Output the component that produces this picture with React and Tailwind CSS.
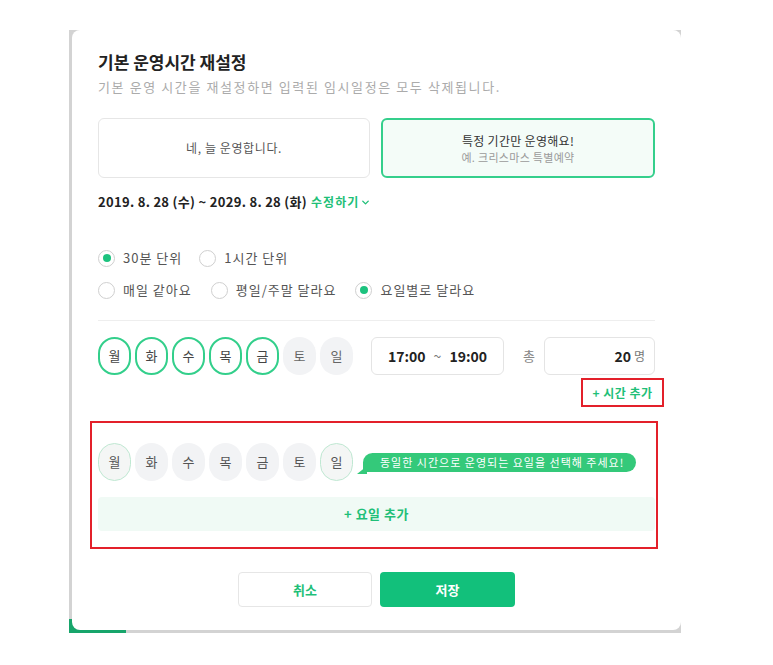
import { ChevronDown } from "lucide-react";

const font = { fontFamily: '"Noto Sans CJK KR", "Noto Sans", sans-serif' };

const days = ["월", "화", "수", "목", "금", "토", "일"];

function Radio({ checked, label }) {
  return (
    <label className="flex items-center gap-[8px]">
      <span className="w-[17px] h-[17px] rounded-full border border-[#cfcfcf] bg-white flex items-center justify-center">
        {checked && <span className="w-[8px] h-[8px] rounded-full bg-[#1cc27e]" />}
      </span>
      <span className="text-[13px] tracking-[1px] text-[#555]">{label}</span>
    </label>
  );
}

export default function App() {
  return (
    <div className="w-[773px] h-[665px] bg-white pt-[30px] pl-[69px]" style={font}>
      <div className="relative w-[612px] h-[603px] bg-[#d3d3d3] pl-[3px] pb-[3px]">
        {/* page progress behind the modal */}
        <div className="absolute left-0 bottom-0 w-[57px] h-[14px] bg-[#17a56b]" />

        <div className="relative h-full bg-white rounded-[8px] px-[26px] pt-[20px]">
          {/* Title */}
          <h2 className="text-[17px] leading-[24px] font-bold text-[#222]">기본 운영시간 재설정</h2>
          <p className="mt-[3px] text-[13px] leading-[20px] tracking-[1.6px] text-[#ababab]">
            기본 운영 시간을 재설정하면 입력된 임시일정은 모두 삭제됩니다.
          </p>

          {/* Options */}
          <div className="mt-[21px] flex gap-[11px]">
            <div className="flex-1 h-[60px] rounded-[6px] border border-[#e6e6e6] flex items-center justify-center text-[12px] tracking-[0.6px] text-[#555]">
              네, 늘 운영합니다.
            </div>
            <div className="flex-1 h-[60px] rounded-[6px] border-2 border-[#35cf8c] bg-[#f4fcf8] flex flex-col items-center justify-center">
              <span className="text-[12px] leading-[17px] tracking-[0.3px] text-[#333]">특정 기간만 운영해요!</span>
              <span className="text-[11px] leading-[16px] tracking-[0.3px] text-[#9a9a9a]">예. 크리스마스 특별예약</span>
            </div>
          </div>

          {/* Period */}
          <div className="mt-[14px] h-[20px] flex items-center text-[13px] font-bold tracking-[0.3px] text-[#222]">
            <span>2019. 8. 28 (수) ~ 2029. 8. 28 (화)</span>
            <span className="ml-[4px] text-[12px] tracking-[1px] text-[#1fbf78] flex items-center">
              수정하기
              <ChevronDown size={11} strokeWidth={3} className="ml-[1px]" />
            </span>
          </div>

          {/* Units */}
          <div className="mt-[36px] h-[20px] flex items-center gap-[17px]">
            <Radio checked label="30분 단위" />
            <Radio label="1시간 단위" />
          </div>
          <div className="mt-[12px] h-[20px] flex items-center gap-[19px]">
            <Radio label="매일 같아요" />
            <Radio label="평일/주말 달라요" />
            <Radio checked label="요일별로 달라요" />
          </div>

          <div className="mt-[20px] h-px bg-[#eeeeee]" />

          {/* Day row */}
          <div className="mt-[16px] flex items-center">
            <div className="flex gap-[4px]">
              {days.map((d, i) =>
                i < 5 ? (
                  <span
                    key={d}
                    className="w-[33px] h-[38px] rounded-full border-2 border-[#33cf8b] bg-white flex items-center justify-center text-[13px] text-[#444]"
                  >
                    {d}
                  </span>
                ) : (
                  <span
                    key={d}
                    className="w-[33px] h-[38px] rounded-full bg-[#f2f3f5] flex items-center justify-center text-[13px] text-[#666]"
                  >
                    {d}
                  </span>
                )
              )}
            </div>
            <div className="ml-[18px] w-[133px] h-[38px] rounded-[6px] border border-[#e4e4e4] flex items-center justify-center gap-[8px] text-[14px] font-bold text-[#222]">
              <span>17:00</span>
              <span className="font-normal text-[#777]">~</span>
              <span>19:00</span>
            </div>
            <span className="ml-[19px] text-[13px] text-[#888]">총</span>
            <div className="ml-[9px] flex-1 h-[38px] rounded-[6px] border border-[#e4e4e4] flex items-center justify-end pr-[9px] gap-[3px]">
              <span className="text-[14px] font-bold text-[#222]">20</span>
              <span className="text-[12px] text-[#777]">명</span>
            </div>
          </div>

          {/* Add time */}
          <div className="mt-[3px] flex justify-end -mr-[9px]">
            <div className="w-[83px] h-[29px] border-2 border-[#e3202a] flex items-center justify-center text-[12px] font-bold tracking-[0.5px] text-[#1fbf78]">
              + 시간 추가
            </div>
          </div>

          {/* New day group */}
          <div className="mt-[14px] -ml-[8px] -mr-[3px] h-[128px] border-2 border-[#e3202a] pt-[20px] pl-[6px] pr-[1px]">
            <div className="flex items-center">
              <div className="flex gap-[4px]">
                {days.map((d, i) => (
                  <span
                    key={d}
                    className={
                      i === 0 || i === 6
                        ? "w-[33px] h-[38px] rounded-full border border-[#bfe8d2] bg-[#f4f6f5] flex items-center justify-center text-[13px] text-[#555]"
                        : "w-[33px] h-[38px] rounded-full bg-[#f2f3f5] flex items-center justify-center text-[13px] text-[#555]"
                    }
                  >
                    {d}
                  </span>
                ))}
              </div>
              <div className="relative ml-[10px] w-[273px] h-[19px] rounded-[10px] rounded-bl-none bg-[#34c97a] flex items-center pl-[17px] text-[11px] tracking-[1px] text-white whitespace-nowrap">
                <svg className="absolute -left-[6px] bottom-[-2px]" width="10" height="8" viewBox="0 0 10 8">
                  <path d="M0 8 L10 0 L10 8 Z" fill="#34c97a" />
                </svg>
                동일한 시간으로 운영되는 요일을 선택해 주세요!
              </div>
            </div>
            <div className="mt-[16px] h-[34px] rounded-[4px] bg-[#f0faf5] flex items-center justify-center text-[13px] font-bold tracking-[0.5px] text-[#1fbf78]">
              + 요일 추가
            </div>
          </div>

          {/* Actions */}
          <div className="mt-[23px] flex justify-center gap-[8px]">
            <button className="w-[134px] h-[35px] rounded-[4px] border border-[#e6e6e6] bg-white text-[13px] font-bold text-[#1fbf78]">
              취소
            </button>
            <button className="w-[135px] h-[35px] rounded-[4px] bg-[#12c07b] text-[13px] font-bold text-white">
              저장
            </button>
          </div>
        </div>
      </div>
    </div>
  );
}
